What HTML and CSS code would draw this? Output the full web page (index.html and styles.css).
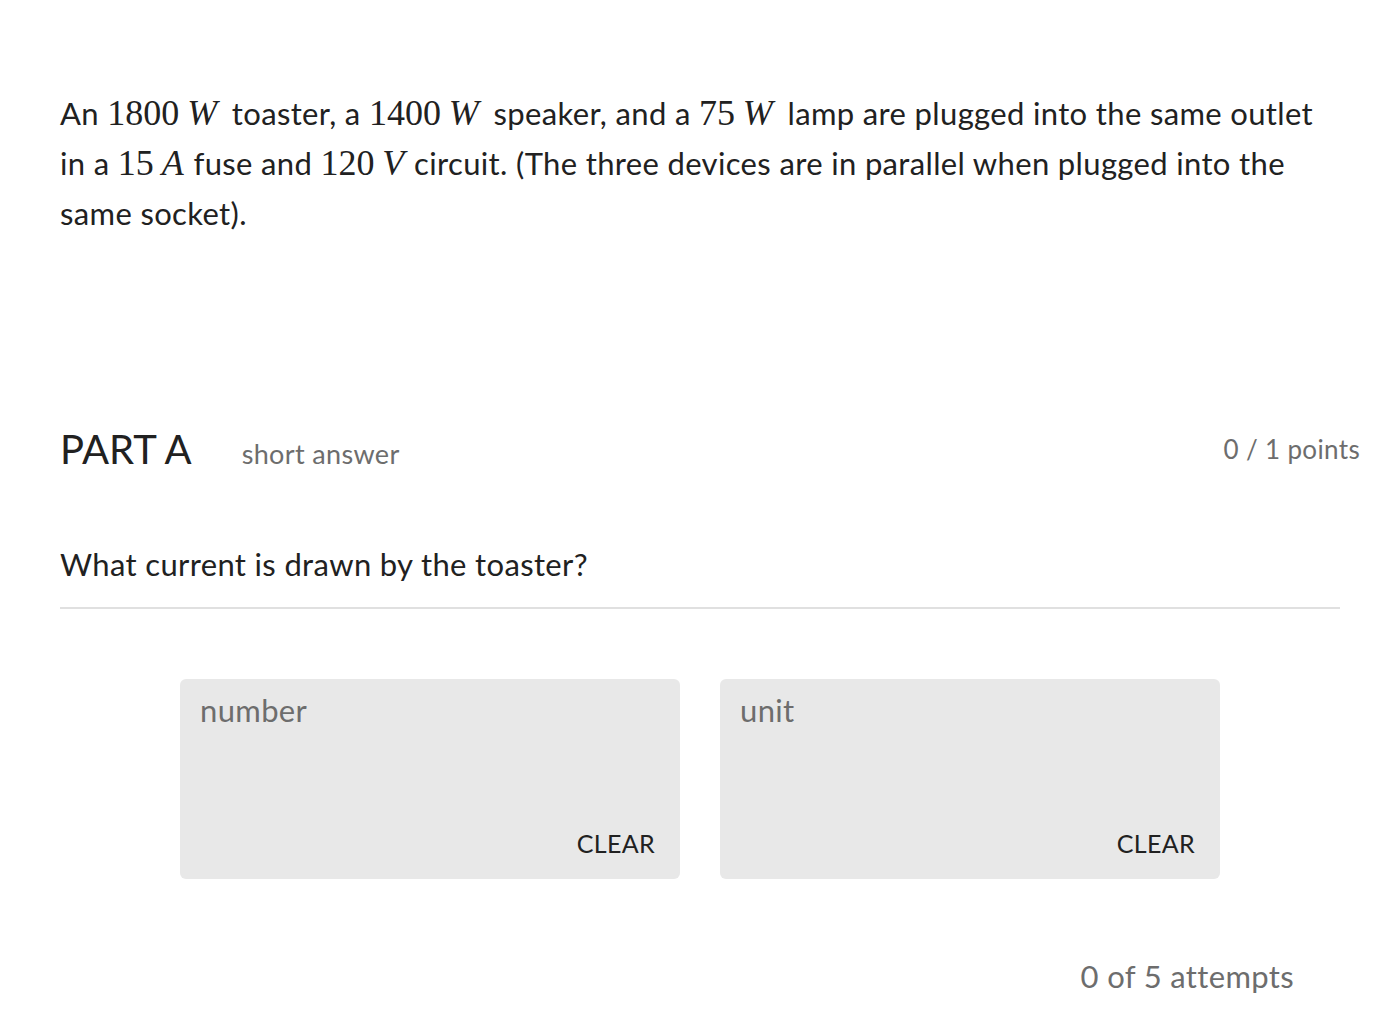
FILE: index.html
```html
<!DOCTYPE html>
<html lang="en">
<head>
<meta charset="UTF-8">
<meta name="viewport" content="width=device-width, initial-scale=1.0">
<title>Question</title>
<link rel="stylesheet" href="styles.css">
</head>
<body>
    <div class="question">
        <!-- Problem statement -->
        <p class="prompt">An <span class="math">1800<i class="wide">W</i></span> toaster, a <span class="math">1400<i class="wide">W</i></span> speaker, and a <span class="math">75<i class="wide">W</i></span> lamp are plugged into the same outlet in a <span class="math">15<i>A</i></span> fuse and <span class="math">120<i>V</i></span> circuit. (The three devices are in parallel when plugged into the same socket).</p>

        <!-- Part A -->
        <section class="part">
            <div class="part-head">
                <div class="part-title">
                    <h2>PART A</h2>
                    <span class="part-type">short answer</span>
                </div>
                <span class="points">0 / 1 points</span>
            </div>

            <p class="part-question">What current is drawn by the toaster?</p>

            <div class="answer-row">
                <div class="answer-box">
                    <div class="answer-input">number</div>
                    <button class="clear">CLEAR</button>
                </div>
                <div class="answer-box">
                    <div class="answer-input">unit</div>
                    <button class="clear">CLEAR</button>
                </div>
            </div>

            <div class="attempts">0 of 5 attempts</div>
        </section>
    </div>
</body>
</html>
```

FILE: styles.css
```css
body, html {
    margin: 0;
    background: #ffffff;
    color: #212121;
    font-family: Lato, "Open Sans", sans-serif;
    font-size: 31px;
    letter-spacing: 0.35px;
}
.question {
    padding: 88px 56px 0 60px;
}
.prompt {
    margin: 0;
    line-height: 50px;
}
.math {
    font-family: "Liberation Serif", "Times New Roman", serif;
    font-size: 36px;
    letter-spacing: 0;
    line-height: 1;
}
.math i {
    margin-left: 0.22em;
    margin-right: 0.04em;
}
.math i.wide {
    letter-spacing: 5px;
}
.part {
    margin-top: 187px;
}
.part-head {
    display: flex;
    justify-content: space-between;
    align-items: center;
    margin-right: -20px;
}
.part-title {
    display: flex;
    align-items: baseline;
}
.part-title h2 {
    margin: 0;
    font-size: 40px;
    font-weight: 400;
    letter-spacing: 0;
    line-height: 1.2;
}
.part-type {
    margin-left: 50px;
    font-size: 27px;
    color: #6d6d6d;
}
.points {
    font-size: 26px;
    color: #6d6d6d;
}
.part-question {
    margin: 66px 0 0 0;
    line-height: 50px;
    padding-bottom: 18px;
    border-bottom: 2px solid #e0e0e0;
}
.answer-row {
    display: flex;
    justify-content: center;
    gap: 40px;
    margin-top: 70px;
}
.answer-box {
    width: 500px;
    height: 200px;
    box-sizing: border-box;
    background: #e8e8e8;
    border-radius: 6px;
    display: flex;
    flex-direction: column;
    padding: 13px 25px 21px 20px;
}
.answer-input {
    flex: 1;
    color: #6d6d6d;
    line-height: 1.2;
}
.clear {
    align-self: flex-end;
    background: none;
    border: none;
    padding: 0;
    font-family: Lato, "Open Sans", sans-serif;
    font-size: 25px;
    letter-spacing: 0.35px;
    line-height: 1.2;
    color: #212121;
    cursor: pointer;
}
.attempts {
    margin-top: 79px;
    text-align: right;
    padding-right: 46px;
    color: #6d6d6d;
    line-height: 1.2;
}
```
